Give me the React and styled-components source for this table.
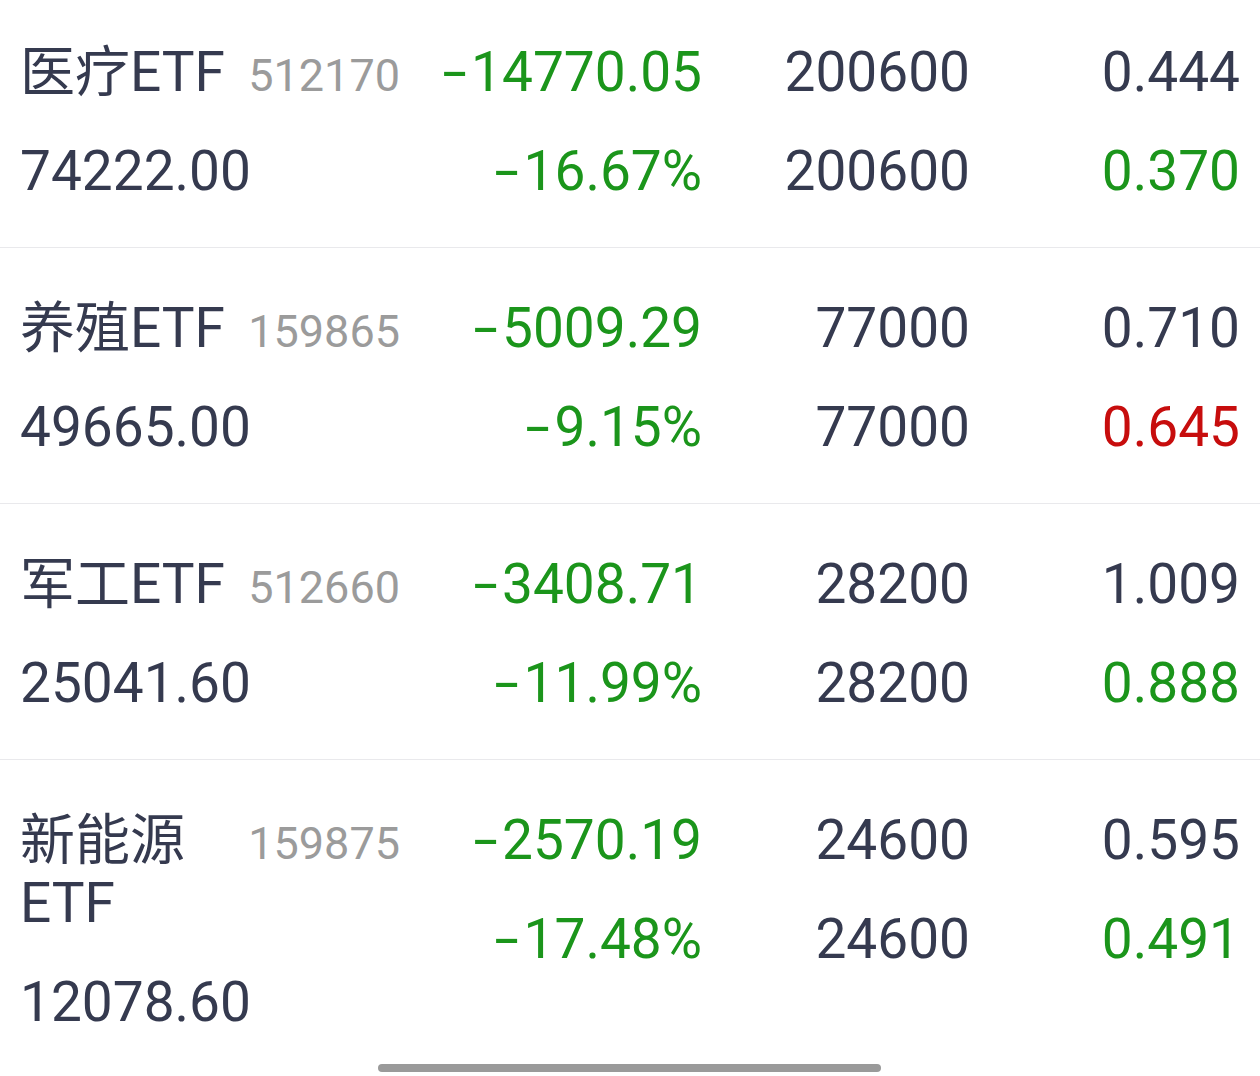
import React from 'react';
import styled, { createGlobalStyle } from 'styled-components';

const GlobalStyle = createGlobalStyle`
  html, body {
    margin: 0;
    padding: 0;
    background: #ffffff;
    overflow: hidden;
  }
  body {
    font-family: Roboto, "Noto Sans CJK SC", sans-serif;
    -webkit-font-smoothing: antialiased;
  }
`;

const TEXT = '#353a4f';
const GREEN = '#1b951b';
const RED = '#c70d0d';
const GRAY = '#9b9b9b';

const tones = { plain: TEXT, down: GREEN, up: RED };

const Page = styled.div`
  position: relative;
  width: 1260px;
  height: 1076px;
  overflow: hidden;
`;

const List = styled.div`
  margin-top: -8px;
`;

const Row = styled.div`
  display: grid;
  grid-template-columns: 380px 302px 268px 1fr;
  padding: 49px 20px 44px;
  border-bottom: 1px solid #e9e9ec;
`;

const Cell = styled.div`
  display: flex;
  flex-direction: column;
  gap: 36px;
  align-items: ${(p) => (p.$left ? 'stretch' : 'flex-end')};
`;

const NameLine = styled.div`
  display: flex;
  align-items: baseline;
`;

const Name = styled.div`
  width: 230px;
  font-size: 55px;
  line-height: 63px;
  color: ${TEXT};
`;

const Code = styled.span`
  font-size: 45px;
  line-height: 45px;
  color: ${GRAY};
`;

const Value = styled.div`
  font-size: 55px;
  line-height: 63px;
  white-space: nowrap;
  color: ${(p) => tones[p.$tone || 'plain']};
`;

/* the app draws its minus as a longer dash than Roboto's hyphen */
const Sign = styled.span`
  display: inline-block;
  transform: scaleX(1.6);
  margin: 0 9px 0 3px;
`;

const HomeBar = styled.div`
  position: absolute;
  left: 378px;
  bottom: 4px;
  width: 503px;
  height: 8px;
  border-radius: 4px;
  background: #9a9a9a;
`;

const holdings = [
  {
    name: '医疗ETF', code: '512170', value: '74222.00',
    pnl: '14770.05', pct: '16.67%', qty: '200600', avail: '200600',
    cost: '0.444', price: '0.370', priceTone: 'down',
  },
  {
    name: '养殖ETF', code: '159865', value: '49665.00',
    pnl: '5009.29', pct: '9.15%', qty: '77000', avail: '77000',
    cost: '0.710', price: '0.645', priceTone: 'up',
  },
  {
    name: '军工ETF', code: '512660', value: '25041.60',
    pnl: '3408.71', pct: '11.99%', qty: '28200', avail: '28200',
    cost: '1.009', price: '0.888', priceTone: 'down',
  },
  {
    name: '新能源ETF', code: '159875', value: '12078.60',
    pnl: '2570.19', pct: '17.48%', qty: '24600', avail: '24600',
    cost: '0.595', price: '0.491', priceTone: 'down',
  },
];

const Loss = ({ children }) => (
  <Value $tone="down">
    <Sign>-</Sign>
    {children}
  </Value>
);

const HoldingRow = ({ item }) => (
  <Row>
    <Cell $left>
      <NameLine>
        <Name>{item.name}</Name>
        <Code>{item.code}</Code>
      </NameLine>
      <Value>{item.value}</Value>
    </Cell>
    <Cell>
      <Loss>{item.pnl}</Loss>
      <Loss>{item.pct}</Loss>
    </Cell>
    <Cell>
      <Value>{item.qty}</Value>
      <Value>{item.avail}</Value>
    </Cell>
    <Cell>
      <Value>{item.cost}</Value>
      <Value $tone={item.priceTone}>{item.price}</Value>
    </Cell>
  </Row>
);

export default function App() {
  return (
    <Page>
      <GlobalStyle />
      <List>
        {holdings.map((h) => (
          <HoldingRow key={h.code} item={h} />
        ))}
      </List>
      <HomeBar />
    </Page>
  );
}
